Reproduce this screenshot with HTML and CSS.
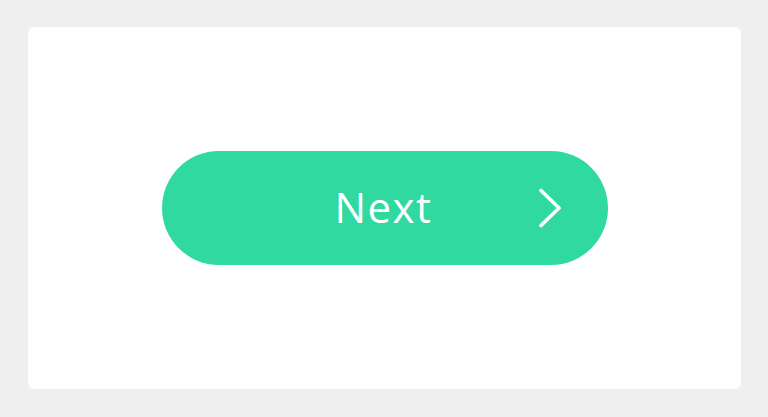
FILE: index.html
```html
<!DOCTYPE html>
<html lang="en">
<head>
  <meta charset="utf-8">
  <title>Next</title>
  <link rel="stylesheet" href="styles.css">
</head>
<body>
  <div class="panel">
    <button type="button" class="next-button">
      <span class="label">Next</span>
      <svg class="chevron" width="24" height="40" viewBox="0 0 24 40" aria-hidden="true">
        <path d="M3 2.5 L21 20 L3 37.5" fill="none" stroke="#fff" stroke-width="3.6" stroke-linecap="round" stroke-linejoin="round"/>
      </svg>
    </button>
  </div>
</body>
</html>
```
FILE: styles.css
```css
html,
body {
  height: 100%;
}

body {
  margin: 0;
  padding: 27px 27px 28px 28px;
  box-sizing: border-box;
  background: #efefef;
  font-family: "Open Sans", Arial, sans-serif;
}

.panel {
  height: 100%;
  background: #fff;
  border-radius: 6px;
  display: flex;
  align-items: center;
  justify-content: center;
}

.next-button {
  width: 446px;
  height: 114px;
  padding: 0 46px 0 0;
  border: 0;
  border-radius: 57px;
  background: #2fd9a0;
  color: #fff;
  display: grid;
  grid-template-columns: 1fr auto 1fr;
  align-items: center;
  cursor: pointer;
  font-family: inherit;
}

.label {
  grid-column: 2;
  font-size: 42px;
  font-weight: 500;
  letter-spacing: 1.5px;
  margin-left: 44px;
  line-height: 1;
  padding-bottom: 2px;
}

.chevron {
  grid-column: 3;
  justify-self: end;
}
```
